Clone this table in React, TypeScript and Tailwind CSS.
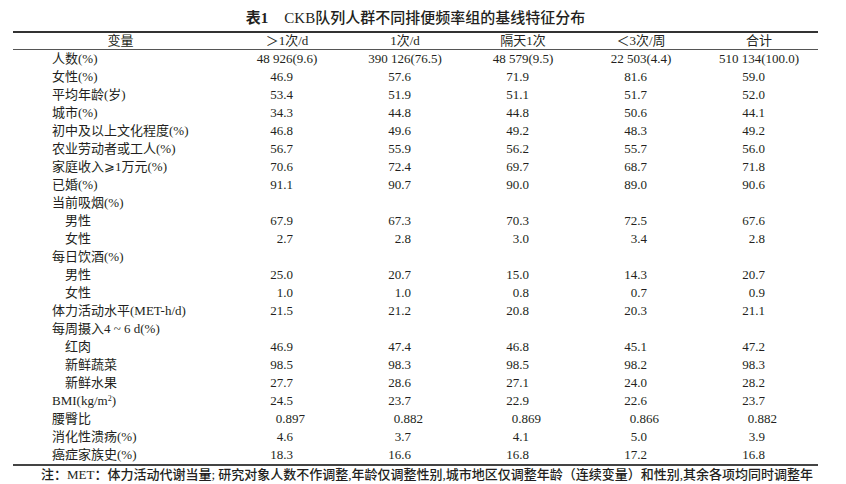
const font = "font-['Liberation_Serif','Noto_Sans_CJK_SC',serif]";

type Row = {
  label: string;
  vals?: string[];
  indent?: boolean;
  center?: boolean;
  wide?: boolean;
};

const rows: Row[] = [
  { label: "人数(%)", vals: ["48 926(9.6)", "390 126(76.5)", "48 579(9.5)", "22 503(4.4)", "510 134(100.0)"], center: true },
  { label: "女性(%)", vals: ["46.9", "57.6", "71.9", "81.6", "59.0"] },
  { label: "平均年龄(岁)", vals: ["53.4", "51.9", "51.1", "51.7", "52.0"] },
  { label: "城市(%)", vals: ["34.3", "44.8", "44.8", "50.6", "44.1"] },
  { label: "初中及以上文化程度(%)", vals: ["46.8", "49.6", "49.2", "48.3", "49.2"] },
  { label: "农业劳动者或工人(%)", vals: ["56.7", "55.9", "56.2", "55.7", "56.0"] },
  { label: "家庭收入⩾1万元(%)", vals: ["70.6", "72.4", "69.7", "68.7", "71.8"] },
  { label: "已婚(%)", vals: ["91.1", "90.7", "90.0", "89.0", "90.6"] },
  { label: "当前吸烟(%)" },
  { label: "男性", vals: ["67.9", "67.3", "70.3", "72.5", "67.6"], indent: true },
  { label: "女性", vals: ["2.7", "2.8", "3.0", "3.4", "2.8"], indent: true },
  { label: "每日饮酒(%)" },
  { label: "男性", vals: ["25.0", "20.7", "15.0", "14.3", "20.7"], indent: true },
  { label: "女性", vals: ["1.0", "1.0", "0.8", "0.7", "0.9"], indent: true },
  { label: "体力活动水平(MET-h/d)", vals: ["21.5", "21.2", "20.8", "20.3", "21.1"] },
  { label: "每周摄入4 ~ 6 d(%)" },
  { label: "红肉", vals: ["46.9", "47.4", "46.8", "45.1", "47.2"], indent: true },
  { label: "新鲜蔬菜", vals: ["98.5", "98.3", "98.5", "98.2", "98.3"], indent: true },
  { label: "新鲜水果", vals: ["27.7", "28.6", "27.1", "24.0", "28.2"], indent: true },
  { label: "BMI", vals: ["24.5", "23.7", "22.9", "22.6", "23.7"] },
  { label: "腰臀比", vals: ["0.897", "0.882", "0.869", "0.866", "0.882"], wide: true },
  { label: "消化性溃疡(%)", vals: ["4.6", "3.7", "4.1", "5.0", "3.9"] },
  { label: "癌症家族史(%)", vals: ["18.3", "16.6", "16.8", "17.2", "16.8"] },
];

const headers = ["变量", "＞1次/d", "1次/d", "隔天1次", "＜3次/周", "合计"];

const grid = "grid grid-cols-[215px_118px_118px_118px_118px_118px]";

function Label({ row }: { row: Row }) {
  return (
    <div className={`whitespace-nowrap ${row.indent ? "pl-[52px]" : "pl-[39px]"}`}>
      {row.label === "BMI" ? (
        <>
          BMI(kg/m<sup className="text-[8px]">2</sup>)
        </>
      ) : (
        row.label
      )}
    </div>
  );
}

export default function App() {
  return (
    <div className={`w-[846px] h-[484px] bg-white text-[#231f20] ${font} overflow-hidden`}>
      <div className="ml-[13px] w-[805px]">
        <div className="h-[31px] pt-[8px] flex justify-center text-[15px] leading-[20px]">
          <span className="font-bold mr-[16px]">表1</span>
          <span className="font-medium">CKB队列人群不同排便频率组的基线特征分布</span>
        </div>

        <div className="border-t-2 border-b border-t-[#333] border-b-[#555]">
          <div className={`${grid} h-[16px] items-center text-[13px] leading-[16px]`}>
            {headers.map((h) => (
              <div key={h} className="text-center">
                {h}
              </div>
            ))}
          </div>
        </div>

        <div className="border-b-2 border-b-[#444]">
          {rows.map((row, i) => (
            <div key={i} className={`${grid} h-[18px] items-center text-[13px] leading-[18px]`}>
              <Label row={row} />
              {row.vals?.map((v, j) => (
                <div
                  key={j}
                  className={
                    row.center
                      ? "text-center whitespace-nowrap"
                      : row.wide
                      ? "text-right pr-[41px]"
                      : "text-right pr-[53px]"
                  }
                >
                  {v}
                </div>
              ))}
            </div>
          ))}
        </div>

        <div className="h-[17px] pl-[28px] text-[13px] leading-[17px] font-medium whitespace-nowrap">
          注：MET：体力活动代谢当量; 研究对象人数不作调整,年龄仅调整性别,城市地区仅调整年龄（连续变量）和性别,其余各项均同时调整年
        </div>
      </div>
    </div>
  );
}
